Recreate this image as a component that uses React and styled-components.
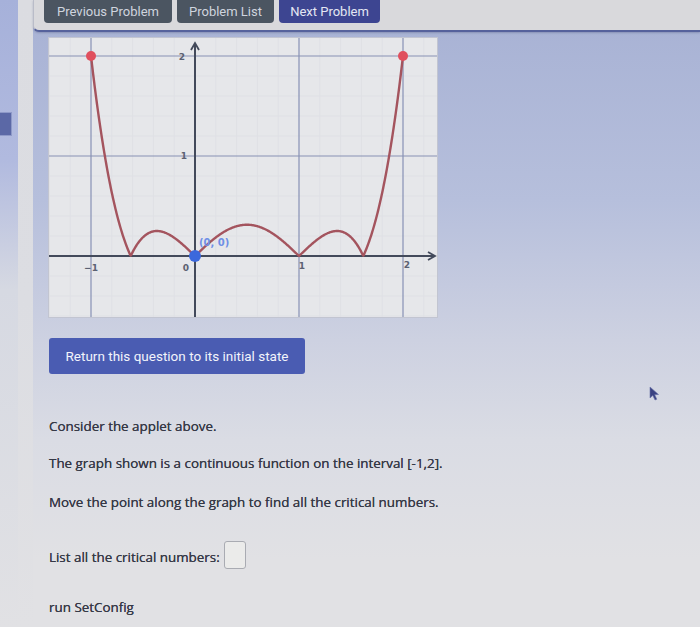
import React from "react";
import styled, { createGlobalStyle } from "styled-components";

const Global = createGlobalStyle`
  html, body { margin: 0; padding: 0; }
  body { width: 700px; height: 627px; overflow: hidden; font-family: "Open Sans", "Noto Sans", sans-serif; }
`;

const Page = styled.div`
  position: relative;
  display: flex;
  width: 700px;
  height: 627px;
  overflow: hidden;
  background: #e0e0e4;
`;

const Sidebar = styled.div`
  width: 18px;
  flex: none;
  background: linear-gradient(180deg, #a6b1da 0px, #b1badf 160px, #d6d9e2 290px, #e1e1e4 627px);
  padding-top: 112px;
  box-sizing: border-box;
`;

const SideTab = styled.div`
  width: 12px;
  height: 24px;
  background: #5b68a6;
  border: 1px solid #8e99c8;
  border-left: none;
  box-sizing: border-box;
`;

const Gutter = styled.div`
  width: 15px;
  flex: none;
  background: linear-gradient(180deg, #dbdce1 0px, #dcdde2 300px, #e1e1e4 627px);
`;

const Main = styled.div`
  flex: 1;
  display: flex;
  flex-direction: column;
  min-width: 0;
  background: linear-gradient(180deg, #a9b3d5 30px, #b6bfdc 200px, #cdd1e1 340px, #dadce4 440px, #e1e1e4 560px);
`;

const Header = styled.div`
  height: 30px;
  display: flex;
  gap: 5px;
  padding-left: 10px;
  background: #d9d9dc;
  border-left: 1px solid #b9bcc8;
  border-bottom: 2px solid #56629c;
  border-bottom-left-radius: 6px;
  box-shadow: 0 1px 2px rgba(60, 70, 110, 0.3);
`;

const NavButton = styled.button`
  width: ${(p) => p.$w}px;
  height: 23px;
  border: none;
  border-radius: 0 0 4px 4px;
  background: ${(p) => (p.$primary ? "#3d4591" : "#4b5561")};
  color: ${(p) => (p.$primary ? "#e4e7f3" : "#cfd4de")};
  font-family: "Roboto", "Liberation Sans", sans-serif;
  font-size: 13px;
  padding: 0;
  line-height: 20px;
`;

const Content = styled.div`
  padding: 5px 0 0 15px;
  display: flex;
  flex-direction: column;
  align-items: flex-start;
`;

const GraphFrame = styled.div`
  width: 390px;
  height: 281px;
  background: #e6e7ea;
  border: 1px solid #c2c5d1;
  box-sizing: border-box;
`;

const ResetButton = styled.button`
  margin: 20px 0 0 1px;
  width: 256px;
  height: 36px;
  border: none;
  border-radius: 3px;
  background: #4a5cb2;
  color: #f2f4fb;
  font-family: "Roboto", "Liberation Sans", sans-serif;
  font-size: 13.5px;
  padding: 0;
`;

const Paragraph = styled.div`
  margin: ${(p) => p.$top}px 0 0 1px;
  display: flex;
  align-items: center;
  gap: 4px;
  color: #363946;
  font-family: "Open Sans", "Noto Sans", sans-serif;
  font-size: 13.4px;
  line-height: 18px;
  text-shadow: 0 0 0.4px #363946;
`;

const AnswerBox = styled.span`
  display: inline-block;
  width: 22px;
  height: 28px;
  margin-top: -4px;
  box-sizing: border-box;
  border: 1px solid #a9abb2;
  border-radius: 3px;
  background: #ebebea;
`;

const Cursor = styled.svg`
  position: absolute;
  left: 649px;
  top: 386px;
`;

const X = (x) => 146 + 104 * x;
const Y = (y) => 218 - 100 * y;
const f = (x) => Math.abs((x * x - x) * (x * x - x - 1));

function curvePath() {
  const pts = [];
  const n = 600;
  for (let i = 0; i <= n; i++) {
    const x = -1 + (3 * i) / n;
    pts.push(`${i === 0 ? "M" : "L"}${X(x).toFixed(2)},${Y(f(x)).toFixed(2)}`);
  }
  return pts.join(" ");
}

const LabelText = styled.text`
  font-family: "DejaVu Sans", sans-serif;
  font-size: 9px;
  font-weight: bold;
  fill: #5b6172;
`;

function Graph() {
  const minor = [];
  for (let i = -7; i <= 12; i++) {
    const x = i * 0.2;
    if (Math.abs(x - Math.round(x)) < 1e-6) continue;
    minor.push(<line key={"mx" + i} x1={X(x)} y1={0} x2={X(x)} y2={281} stroke="#dfe0e5" strokeWidth="1" />);
  }
  for (let j = -3; j <= 11; j++) {
    const y = j * 0.2;
    if (Math.abs(y - Math.round(y)) < 1e-6) continue;
    minor.push(<line key={"my" + j} x1={0} y1={Y(y)} x2={390} y2={Y(y)} stroke="#dfe0e5" strokeWidth="1" />);
  }
  return (
    <svg width="388" height="279" viewBox="0 0 388 279">
      {minor}
      {[-1, 1, 2].map((x) => (
        <line key={"gx" + x} x1={X(x)} y1={0} x2={X(x)} y2={281} stroke="#8791b4" strokeWidth="1.2" />
      ))}
      {[1, 2].map((y) => (
        <line key={"gy" + y} x1={0} y1={Y(y)} x2={390} y2={Y(y)} stroke="#8791b4" strokeWidth="1.2" />
      ))}
      <line x1={X(0)} y1={281} x2={X(0)} y2={6} stroke="#434a5b" strokeWidth="2" />
      <path d={`M${X(0) - 4},${12} L${X(0)},${5} L${X(0) + 4},${12}`} fill="none" stroke="#434a5b" strokeWidth="1.8" />
      <line x1={0} y1={Y(0)} x2={386} y2={Y(0)} stroke="#434a5b" strokeWidth="2" />
      <path d={`M${379},${Y(0) - 4} L${386},${Y(0)} L${379},${Y(0) + 4}`} fill="none" stroke="#434a5b" strokeWidth="1.8" />
      <LabelText x={133} y={22} textAnchor="middle">2</LabelText>
      <LabelText x={135} y={121} textAnchor="middle">1</LabelText>
      <LabelText x={137} y={233} textAnchor="middle">0</LabelText>
      <LabelText x={X(-1)} y={233} textAnchor="middle">−1</LabelText>
      <LabelText x={X(1) + 3} y={231} textAnchor="middle">1</LabelText>
      <LabelText x={X(2) + 4} y={230} textAnchor="middle">2</LabelText>
      <path d={curvePath()} fill="none" stroke="#a4545e" strokeWidth="2.4" strokeLinejoin="round" />
      <circle cx={X(-1)} cy={Y(2)} r="5" fill="#e0505e" />
      <circle cx={X(2)} cy={Y(2)} r="5" fill="#e0505e" />
      <circle cx={X(0)} cy={Y(0)} r="6" fill="#3b68dc" />
      <text x={X(0) + 4} y={Y(0) - 10} fontFamily="DejaVu Sans, sans-serif" fontSize="10" fontWeight="bold" fill="#6f8fe6">
        (0, 0)
      </text>
    </svg>
  );
}

export default function App() {
  return (
    <>
      <Global />
      <Page>
        <Sidebar>
          <SideTab />
        </Sidebar>
        <Gutter />
        <Main>
          <Header>
            <NavButton $w={128}>Previous Problem</NavButton>
            <NavButton $w={97}>Problem List</NavButton>
            <NavButton $w={101} $primary>Next Problem</NavButton>
          </Header>
          <Content>
            <GraphFrame>
              <Graph />
            </GraphFrame>
            <ResetButton>Return this question to its initial state</ResetButton>
            <Paragraph $top={43}>Consider the applet above.</Paragraph>
            <Paragraph $top={19}>The graph shown is a continuous function on the interval [-1,2].</Paragraph>
            <Paragraph $top={21}>Move the point along the graph to find all the critical numbers.</Paragraph>
            <Paragraph $top={34}>
              List all the critical numbers:
              <AnswerBox />
            </Paragraph>
            <Paragraph $top={29}>run SetConfig</Paragraph>
          </Content>
        </Main>
        <Cursor width="12" height="16" viewBox="0 0 12 16">
          <path d="M1,1 L1,12 L3.8,9.4 L6,14 L7.8,13.2 L5.7,8.7 L9.5,8.5 Z" fill="#3a4282" stroke="#6a72aa" strokeWidth="0.6" />
        </Cursor>
      </Page>
    </>
  );
}
